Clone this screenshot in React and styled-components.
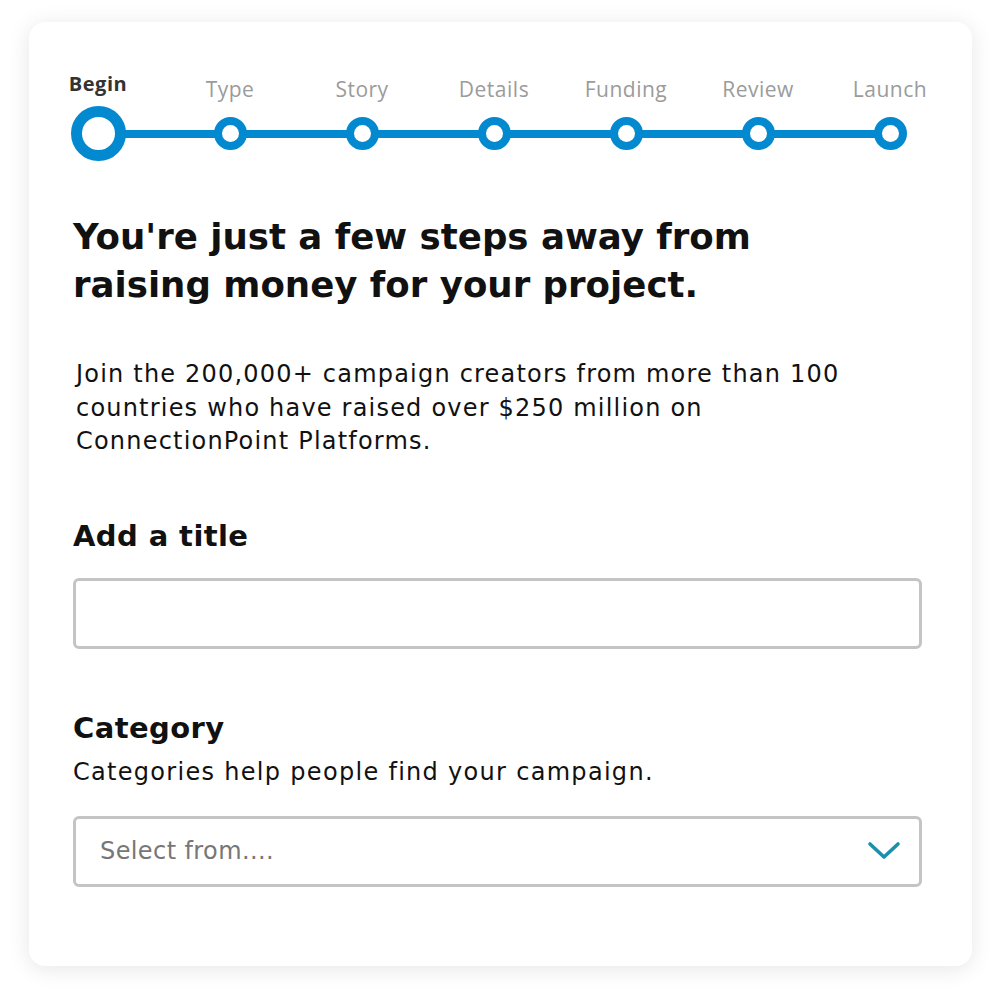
import styled, { createGlobalStyle } from 'styled-components'

const Global = createGlobalStyle`
  body {
    margin: 0;
    background: #fff;
    font-family: "DejaVu Sans", "Open Sans", sans-serif;
  }
  * { box-sizing: border-box; }
`

const Page = styled.div`
  width: 1000px;
  height: 1000px;
  padding: 22px 28px 34px 29px;
`

const Card = styled.div`
  width: 943px;
  height: 944px;
  background: #fff;
  border-radius: 16px;
  box-shadow: 0 3px 22px rgba(0, 0, 0, 0.1);
  padding: 48px 50px 0 44px;
`

const Steps = styled.div`
  display: grid;
  grid-template-columns: repeat(7, 132px);
  margin-left: -41px;
  font-family: "Open Sans", sans-serif;
`

const Step = styled.div`
  display: flex;
  flex-direction: column;
  align-items: center;
`

const Label = styled.div`
  height: 36px;
  font-size: ${p => (p.$active ? '20px' : '21px')};
  font-weight: ${p => (p.$active ? 700 : 400)};
  color: ${p => (p.$active ? '#333' : '#9b9b9b')};
  padding-top: ${p => (p.$active ? '0' : '5px')};
  letter-spacing: 0.5px;
`

const Track = styled.div`
  width: 100%;
  height: 55px;
  display: flex;
  align-items: center;
  justify-content: center;
  background-image: linear-gradient(#0289cf, #0289cf);
  background-repeat: no-repeat;
  background-size: ${p => (p.$first || p.$last ? '50%' : '100%')} 8px;
  background-position: ${p => (p.$first ? 'right center' : p.$last ? 'left center' : 'center')};
`

const Node = styled.div`
  width: ${p => (p.$active ? '55px' : '33px')};
  height: ${p => (p.$active ? '55px' : '33px')};
  border-radius: 50%;
  border: ${p => (p.$active ? '11px' : '8px')} solid #0289cf;
  background: #fff;
`

const Heading = styled.h1`
  margin: 52px 0 0;
  font-size: 35.6px;
  line-height: 48px;
  font-weight: 700;
  color: #111;
`

const Intro = styled.p`
  margin: 49px 0 0 3px;
  font-size: 24px;
  line-height: 33.5px;
  color: #111;
  letter-spacing: 1.2px;
`

const FieldTitle = styled.h2`
  margin: ${p => p.$top} 0 0;
  font-size: 29px;
  line-height: 40px;
  font-weight: 700;
  color: #111;
  letter-spacing: 0.4px;
`

const Hint = styled.p`
  margin: 8px 0 0;
  font-size: 24px;
  line-height: 32px;
  color: #111;
  letter-spacing: 1.3px;
`

const Input = styled.input`
  display: block;
  width: 849px;
  height: 71px;
  margin-top: ${p => p.$top};
  border: 3px solid #c4c4c4;
  border-radius: 6px;
  background: #fff;
  font: inherit;
  font-size: 24px;
  padding: 0 24px;
  outline: none;
`

const Select = styled.div`
  width: 849px;
  height: 71px;
  margin-top: 28px;
  border: 3px solid #c4c4c4;
  border-radius: 6px;
  display: flex;
  align-items: center;
  justify-content: space-between;
  padding: 0 18px 0 24px;
`

const Placeholder = styled.span`
  font-size: 24px;
  color: #777;
  letter-spacing: 0.4px;
`

const steps = ['Begin', 'Type', 'Story', 'Details', 'Funding', 'Review', 'Launch']

export default function App() {
  return (
    <Page>
      <Global />
      <Card>
        <Steps>
          {steps.map((s, i) => (
            <Step key={s}>
              <Label $active={i === 0}>{s}</Label>
              <Track $first={i === 0} $last={i === steps.length - 1}>
                <Node $active={i === 0} />
              </Track>
            </Step>
          ))}
        </Steps>

        <Heading>
          You're just a few steps away from
          <br />
          raising money for your project.
        </Heading>

        <Intro>
          Join the 200,000+ campaign creators from more than 100
          <br />
          countries who have raised over $250 million on
          <br />
          ConnectionPoint Platforms.
        </Intro>

        <FieldTitle $top="57px">Add a title</FieldTitle>
        <Input $top="22px" type="text" />

        <FieldTitle $top="59px">Category</FieldTitle>
        <Hint>Categories help people find your campaign.</Hint>
        <Select>
          <Placeholder>Select from....</Placeholder>
          <svg width="34" height="22" viewBox="0 0 34 22" fill="none">
            <path d="M3 4 L17 17 L31 4" stroke="#1b8fae" strokeWidth="3.6" strokeLinecap="round" strokeLinejoin="round" />
          </svg>
        </Select>
      </Card>
    </Page>
  )
}
